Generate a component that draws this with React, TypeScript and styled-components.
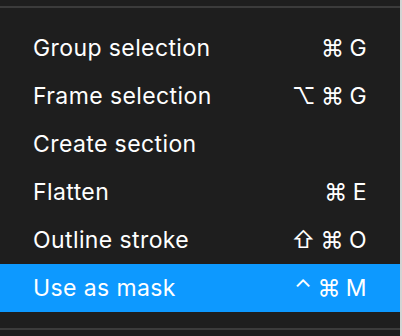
import React from 'react';
import styled, { createGlobalStyle } from 'styled-components';

const Global = createGlobalStyle`
  html, body {
    margin: 0;
    padding: 0;
    background: #1e1e1e;
  }
  body {
    width: 402px;
    height: 336px;
    overflow: hidden;
    font-family: Inter, 'Noto Sans', sans-serif;
    -webkit-font-smoothing: antialiased;
  }
`;

const Frame = styled.div`
  display: flex;
  width: 402px;
  height: 336px;
`;

const Panel = styled.div`
  width: 400px;
  display: flex;
  flex-direction: column;
  background: #1e1e1e;
`;

const Edge = styled.div`
  width: 2px;
  background: #d4d4d4;
`;

const Divider = styled.div<{ $top: number }>`
  height: 2px;
  margin-top: ${(p) => p.$top}px;
  background: #3b3b3b;
`;

const Menu = styled.ul`
  list-style: none;
  margin: 0;
  padding: 16px 0;
  display: flex;
  flex-direction: column;
`;

const Item = styled.li<{ $active?: boolean }>`
  height: 48px;
  display: flex;
  align-items: center;
  justify-content: space-between;
  padding: 0 33px;
  background: ${(p) => (p.$active ? '#0d99ff' : 'transparent')};
  color: #ffffff;
  font-size: 23px;
  font-weight: 400;
  letter-spacing: 0.4px;
`;

const Keys = styled.span`
  display: flex;
  align-items: center;
  gap: 5px;
`;

const Key = styled.span`
  display: inline-block;
`;

type Entry = { label: string; keys: string[]; active?: boolean };

const items: Entry[] = [
  { label: 'Group selection', keys: ['⌘', 'G'] },
  { label: 'Frame selection', keys: ['⌥', '⌘', 'G'] },
  { label: 'Create section', keys: [] },
  { label: 'Flatten', keys: ['⌘', 'E'] },
  { label: 'Outline stroke', keys: ['⇧', '⌘', 'O'] },
  { label: 'Use as mask', keys: ['⌃', '⌘', 'M'], active: true },
];

export default function App() {
  return (
    <Frame>
      <Global />
      <Panel>
        <Divider $top={6} />
        <Menu>
          {items.map((it) => (
            <Item key={it.label} $active={it.active}>
              <span>{it.label}</span>
              <Keys>
                {it.keys.map((k, i) => (
                  <Key key={i}>{k}</Key>
                ))}
              </Keys>
            </Item>
          ))}
        </Menu>
        <Divider $top={0} />
      </Panel>
      <Edge />
    </Frame>
  );
}
